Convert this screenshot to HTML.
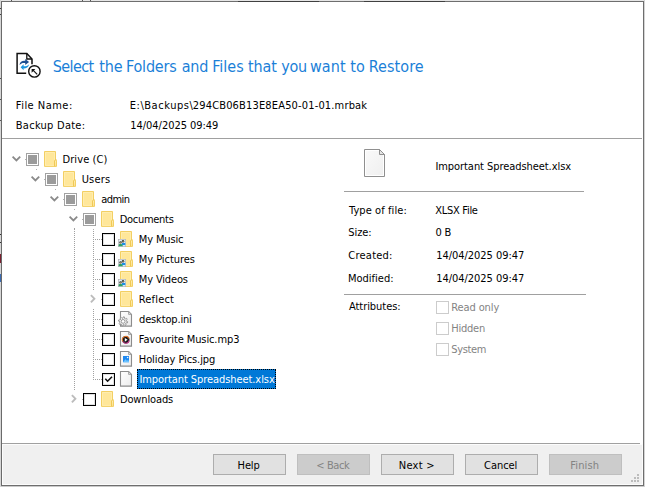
<!DOCTYPE html>
<html><head><meta charset="utf-8"><title>Restore</title>
<style>
html,body{margin:0;padding:0;}
body{width:645px;height:487px;overflow:hidden;background:#e6e6e6;position:relative;font-family:"DejaVu Sans Condensed","Liberation Sans",sans-serif;font-size:11px;color:#000;}
#win{position:absolute;left:1px;top:1px;width:641px;height:483px;border:1px solid #6e6e6e;border-left-color:#6a6a6a;background:#fff;}
.seg{position:absolute;top:1px;height:1px;background:#404040;}
.t{position:absolute;white-space:pre;line-height:14px;height:14px;}
.tt{font-size:16px;line-height:22px;height:22px;color:#1b7fd8;}
.hl{position:absolute;height:1px;background:#a0a0a0;}
#bar{position:absolute;left:2px;top:444px;width:641px;height:41px;background:#f0f0f0;border:1px solid #fcfcfc;box-sizing:border-box;}
.btn{position:absolute;top:454px;width:73px;height:21px;box-sizing:border-box;border:1px solid #adadad;background:#e1e1e1;}
.btn.dis{background:#cccccc;border-color:#bfbfbf;}
.cb{position:absolute;width:13px;height:13px;box-sizing:border-box;border:1px solid #000;background:#fff;box-shadow:inset 0 0 0 1px rgba(0,0,0,.12);}
.cb.mix{border-color:#a2a2a2;box-shadow:none;}
.cb.mix::after{content:"";position:absolute;left:1.3px;top:1.3px;width:8.4px;height:8.4px;background:#9b9b9b;}
.cbd{position:absolute;width:13px;height:13px;box-sizing:border-box;border:1px solid #cccccc;background:#fff;}
.sel{position:absolute;box-sizing:border-box;background:#0078d7;border:1px dotted #000;}
.vd{position:absolute;width:1px;background:repeating-linear-gradient(to bottom,#a0a0a0 0,#a0a0a0 1px,transparent 1px,transparent 2px);}
.hd{position:absolute;height:1px;background:repeating-linear-gradient(to right,#a0a0a0 0,#a0a0a0 1px,transparent 1px,transparent 2px);}
.dot{position:absolute;width:1px;height:1px;background:#b0b0b0;}
.gd{position:absolute;width:2px;height:2px;background:#bcbcbc;}
.px{position:absolute;}
.g{position:absolute;left:0;top:0;white-space:pre;}
svg{position:absolute;overflow:visible;}
</style></head><body>
<div class="px" style="left:0;top:486px;width:645px;height:1px;background:#cacaca"></div>
<div class="px" style="left:0;top:0;width:1px;height:487px;background:#d6d6d6"></div>
<div class="px" style="left:644px;top:0;width:1px;height:487px;background:#d4d4d4"></div>
<div id="win"></div>
<svg width="0" height="0" style="left:0;top:0"><defs><linearGradient id="dg2" x1="0" y1="0" x2="1" y2="1"><stop offset="0" stop-color="#ffffff"/><stop offset="1" stop-color="#ececec"/></linearGradient><linearGradient id="dg" x1="0" y1="0" x2="1" y2="1"><stop offset="0" stop-color="#fafafa"/><stop offset="1" stop-color="#efefef"/></linearGradient></defs></svg>
<div class="seg" style="left:238px;width:81px"></div>
<div class="seg" style="left:364px;width:81px"></div>
<div class="px" style="left:11px;top:0;width:1px;height:1px;background:#555"></div>
<div class="px" style="left:82px;top:0;width:1px;height:1px;background:#555"></div>
<div class="px" style="left:90px;top:0;width:1px;height:1px;background:#555"></div>
<div class="px" style="left:0;top:8px;width:1px;height:1px;background:#444"></div>
<div class="px" style="left:0;top:14px;width:1px;height:1px;background:#444"></div>
<div class="px" style="left:0;top:78px;width:1px;height:1px;background:#555"></div>
<div class="px" style="left:0;top:99px;width:1px;height:1px;background:#555"></div>
<div class="px" style="left:0;top:120px;width:1px;height:1px;background:#555"></div>
<div class="px" style="left:0;top:234px;width:1px;height:1px;background:#333"></div>
<div class="px" style="left:0;top:242px;width:1px;height:1px;background:#333"></div>
<div class="px" style="left:0;top:254px;width:1px;height:9px;background:#7a2030"></div>
<div class="px" style="left:0;top:274px;width:1px;height:8px;background:#3a6ab0"></div>
<svg style="left:15px;top:52px" width="28" height="28" viewBox="15 52 28 28">
<path d="M32 64.2V59L26.8 53.6H17.1V73.3H26.2" fill="none" stroke="#111" stroke-width="1.5"/>
<path d="M26.8 53.6V59H32" fill="none" stroke="#111" stroke-width="1.3"/>
<path d="M19.5 64.9C19.9 61.6 22.5 60.5 25.2 60.9V58.9L29.1 61.9L25.2 64.9V63C23 62.6 21 63.2 19.5 64.9Z" fill="#1d4f91"/>
<path d="M29.1 64.3C28.7 67.6 26.1 68.7 23.6 68.3V70.3L20.6 67.3L23.6 64.3V66.2C25.8 66.6 27.6 66 29.1 64.3Z" fill="#1c96e0"/>
<circle cx="34.4" cy="71.4" r="5.7" fill="#fff" stroke="#111" stroke-width="1.4"/>
<path d="M37.2 74.3L33 70.1" fill="none" stroke="#111" stroke-width="1.2"/>
<path d="M31.6 68.9H35.4L31.6 72.7Z" fill="#111"/>
</svg>
<div class="hl" style="left:2px;top:138px;width:640px"></div>
<svg style="left:364px;top:149px" width="22" height="28" viewBox="0 0 22 28">
<path d="M0.5 0.5H15.5L20.5 5.5V27.5H0.5Z" fill="url(#dg)" stroke="#8f8f8f" stroke-width="1"/>
<path d="M1.5 1.5H15L19.5 6V26.5H1.5Z" fill="none" stroke="#fff" stroke-width="1"/>
<path d="M15.5 0.5V5.5H20.5Z" fill="#e4e4e4" stroke="#8f8f8f" stroke-width="1"/>
</svg>
<div class="hl" style="left:344px;top:191px;width:240px"></div>
<div class="hl" style="left:344px;top:294px;width:242px"></div>
<div class="cbd" style="left:436px;top:301px"></div>
<div class="cbd" style="left:436px;top:322px"></div>
<div class="cbd" style="left:436px;top:343px"></div>
<div id="bar"></div>
<div class="hl" style="left:2px;top:443px;width:638px"></div>
<div class="btn" style="left:213px"></div>
<div class="btn dis" style="left:297px"></div>
<div class="btn" style="left:381px"></div>
<div class="btn" style="left:465px"></div>
<div class="btn dis" style="left:549px"></div>
<div class="gd" style="left:637px;top:474px"></div>
<div class="gd" style="left:634px;top:477px"></div><div class="gd" style="left:637px;top:477px"></div>
<div class="gd" style="left:631px;top:480px"></div><div class="gd" style="left:634px;top:480px"></div><div class="gd" style="left:637px;top:480px"></div>
<svg style="left:12px;top:155px" width="10" height="7" viewBox="0 0 10 7"><path d="M0.6 1.6L4.4 5.4L8.2 1.6" fill="none" stroke="#8a8a8a" stroke-width="1.8"/></svg>
<div class="cb mix" style="left:26px;top:153px"></div>
<svg style="left:44px;top:151px" width="13" height="16" viewBox="0 0 13 16"><path d="M0.5 0.5H11.5V9H12.5V15.4H0.5Z" fill="#ffe79a" stroke="#f3cf63" stroke-width="1"/><path d="M1.5 1.5H10.5V14.4H1.5Z" fill="none" stroke="#ffefb8" stroke-width="1" opacity="0.7"/><path d="M10.6 15.4V10Q10.6 9 11.5 9H12.5" fill="#ffefb4" stroke="#efc54e" stroke-width="1"/></svg>
<svg style="left:31px;top:175px" width="10" height="7" viewBox="0 0 10 7"><path d="M0.6 1.6L4.4 5.4L8.2 1.6" fill="none" stroke="#8a8a8a" stroke-width="1.8"/></svg>
<div class="cb mix" style="left:45px;top:173px"></div>
<svg style="left:63px;top:171px" width="13" height="16" viewBox="0 0 13 16"><path d="M0.5 0.5H11.5V9H12.5V15.4H0.5Z" fill="#ffe79a" stroke="#f3cf63" stroke-width="1"/><path d="M1.5 1.5H10.5V14.4H1.5Z" fill="none" stroke="#ffefb8" stroke-width="1" opacity="0.7"/><path d="M10.6 15.4V10Q10.6 9 11.5 9H12.5" fill="#ffefb4" stroke="#efc54e" stroke-width="1"/></svg>
<svg style="left:50px;top:195px" width="10" height="7" viewBox="0 0 10 7"><path d="M0.6 1.6L4.4 5.4L8.2 1.6" fill="none" stroke="#8a8a8a" stroke-width="1.8"/></svg>
<div class="cb mix" style="left:64px;top:193px"></div>
<svg style="left:82px;top:191px" width="13" height="16" viewBox="0 0 13 16"><path d="M0.5 0.5H11.5V9H12.5V15.4H0.5Z" fill="#ffe79a" stroke="#f3cf63" stroke-width="1"/><path d="M1.5 1.5H10.5V14.4H1.5Z" fill="none" stroke="#ffefb8" stroke-width="1" opacity="0.7"/><path d="M10.6 15.4V10Q10.6 9 11.5 9H12.5" fill="#ffefb4" stroke="#efc54e" stroke-width="1"/></svg>
<svg style="left:69px;top:215px" width="10" height="7" viewBox="0 0 10 7"><path d="M0.6 1.6L4.4 5.4L8.2 1.6" fill="none" stroke="#8a8a8a" stroke-width="1.8"/></svg>
<div class="cb mix" style="left:83px;top:213px"></div>
<svg style="left:101px;top:211px" width="13" height="16" viewBox="0 0 13 16"><path d="M0.5 0.5H11.5V9H12.5V15.4H0.5Z" fill="#ffe79a" stroke="#f3cf63" stroke-width="1"/><path d="M1.5 1.5H10.5V14.4H1.5Z" fill="none" stroke="#ffefb8" stroke-width="1" opacity="0.7"/><path d="M10.6 15.4V10Q10.6 9 11.5 9H12.5" fill="#ffefb4" stroke="#efc54e" stroke-width="1"/></svg>
<div class="cb" style="left:102px;top:233px"></div>
<svg style="left:120px;top:231px" width="13" height="16" viewBox="0 0 13 16"><path d="M0.5 0.5H11.5V9H12.5V15.4H0.5Z" fill="#ffe79a" stroke="#f3cf63" stroke-width="1"/><path d="M1.5 1.5H10.5V14.4H1.5Z" fill="none" stroke="#ffefb8" stroke-width="1" opacity="0.7"/><path d="M10.6 15.4V10Q10.6 9 11.5 9H12.5" fill="#ffefb4" stroke="#efc54e" stroke-width="1"/></svg>
<svg style="left:118px;top:239px" width="8" height="8" viewBox="0 0 8 8"><rect x="0" y="0" width="8" height="8" fill="#b3b5b9"/><rect x="0.7" y="0.7" width="6.6" height="6.6" fill="#e9f1f8"/><rect x="4" y="3.9" width="3.3" height="2.2" fill="#1f8fe6"/><circle cx="5" cy="2.3" r="1.25" fill="#3f4a3c"/><circle cx="5.1" cy="2.9" r="0.7" fill="#c9a27e"/><path d="M0.7 7.3V5.6Q2.4 3.9 4.2 5.6L5 7.3Z" fill="#2f9e5e"/><circle cx="2.5" cy="3.4" r="1.2" fill="#3f4a3c"/><circle cx="2.6" cy="3.9" r="0.7" fill="#c9a27e"/></svg>
<div class="cb" style="left:102px;top:253px"></div>
<svg style="left:120px;top:251px" width="13" height="16" viewBox="0 0 13 16"><path d="M0.5 0.5H11.5V9H12.5V15.4H0.5Z" fill="#ffe79a" stroke="#f3cf63" stroke-width="1"/><path d="M1.5 1.5H10.5V14.4H1.5Z" fill="none" stroke="#ffefb8" stroke-width="1" opacity="0.7"/><path d="M10.6 15.4V10Q10.6 9 11.5 9H12.5" fill="#ffefb4" stroke="#efc54e" stroke-width="1"/></svg>
<svg style="left:118px;top:259px" width="8" height="8" viewBox="0 0 8 8"><rect x="0" y="0" width="8" height="8" fill="#b3b5b9"/><rect x="0.7" y="0.7" width="6.6" height="6.6" fill="#e9f1f8"/><rect x="4" y="3.9" width="3.3" height="2.2" fill="#1f8fe6"/><circle cx="5" cy="2.3" r="1.25" fill="#3f4a3c"/><circle cx="5.1" cy="2.9" r="0.7" fill="#c9a27e"/><path d="M0.7 7.3V5.6Q2.4 3.9 4.2 5.6L5 7.3Z" fill="#2f9e5e"/><circle cx="2.5" cy="3.4" r="1.2" fill="#3f4a3c"/><circle cx="2.6" cy="3.9" r="0.7" fill="#c9a27e"/></svg>
<div class="cb" style="left:102px;top:273px"></div>
<svg style="left:120px;top:271px" width="13" height="16" viewBox="0 0 13 16"><path d="M0.5 0.5H11.5V9H12.5V15.4H0.5Z" fill="#ffe79a" stroke="#f3cf63" stroke-width="1"/><path d="M1.5 1.5H10.5V14.4H1.5Z" fill="none" stroke="#ffefb8" stroke-width="1" opacity="0.7"/><path d="M10.6 15.4V10Q10.6 9 11.5 9H12.5" fill="#ffefb4" stroke="#efc54e" stroke-width="1"/></svg>
<svg style="left:118px;top:279px" width="8" height="8" viewBox="0 0 8 8"><rect x="0" y="0" width="8" height="8" fill="#b3b5b9"/><rect x="0.7" y="0.7" width="6.6" height="6.6" fill="#e9f1f8"/><rect x="4" y="3.9" width="3.3" height="2.2" fill="#1f8fe6"/><circle cx="5" cy="2.3" r="1.25" fill="#3f4a3c"/><circle cx="5.1" cy="2.9" r="0.7" fill="#c9a27e"/><path d="M0.7 7.3V5.6Q2.4 3.9 4.2 5.6L5 7.3Z" fill="#2f9e5e"/><circle cx="2.5" cy="3.4" r="1.2" fill="#3f4a3c"/><circle cx="2.6" cy="3.9" r="0.7" fill="#c9a27e"/></svg>
<svg style="left:90px;top:294px" width="6" height="10" viewBox="0 0 6 10"><path d="M0.9 1.1L4.4 4.7L0.9 8.3" fill="none" stroke="#bcbcbc" stroke-width="1.9"/></svg>
<div class="cb" style="left:102px;top:293px"></div>
<svg style="left:120px;top:291px" width="13" height="16" viewBox="0 0 13 16"><path d="M0.5 0.5H11.5V9H12.5V15.4H0.5Z" fill="#ffe79a" stroke="#f3cf63" stroke-width="1"/><path d="M1.5 1.5H10.5V14.4H1.5Z" fill="none" stroke="#ffefb8" stroke-width="1" opacity="0.7"/><path d="M10.6 15.4V10Q10.6 9 11.5 9H12.5" fill="#ffefb4" stroke="#efc54e" stroke-width="1"/></svg>
<div class="cb" style="left:102px;top:313px"></div>
<svg style="left:120px;top:311px" width="13" height="16" viewBox="0 0 13 16"><path d="M0.5 0.5H8.6L11.5 3.4V15.1H0.5Z" fill="url(#dg2)" stroke="#8c8c8c" stroke-width="1.1"/><path d="M8.6 0.5V3.4H11.5Z" fill="#e2e2e2" stroke="#939393" stroke-width="0.8"/><g transform="translate(3.1,10.4)"><polygon points="4.59,0.30 4.36,1.47 2.96,1.46 2.48,2.17 3.03,3.46 2.04,4.12 1.06,3.13 0.22,3.29 -0.30,4.59 -1.47,4.36 -1.46,2.96 -2.17,2.48 -3.46,3.03 -4.12,2.04 -3.13,1.06 -3.29,0.22 -4.59,-0.30 -4.36,-1.47 -2.96,-1.46 -2.48,-2.17 -3.03,-3.46 -2.04,-4.12 -1.06,-3.13 -0.22,-3.29 0.30,-4.59 1.47,-4.36 1.46,-2.96 2.17,-2.48 3.46,-3.03 4.12,-2.04 3.13,-1.06 3.29,-0.22" fill="#f4f4f4" stroke="#8d8d8d" stroke-width="0.9"/><circle r="1.9" fill="#fff" stroke="#8d8d8d" stroke-width="0.9"/></g></svg>
<div class="cb" style="left:102px;top:333px"></div>
<svg style="left:120px;top:331px" width="13" height="16" viewBox="0 0 13 16"><path d="M0.5 0.5H8.6L11.5 3.4V15.1H0.5Z" fill="url(#dg2)" stroke="#8c8c8c" stroke-width="1.1"/><path d="M8.6 0.5V3.4H11.5Z" fill="#e2e2e2" stroke="#939393" stroke-width="0.8"/><circle cx="5.8" cy="8.8" r="3.7" fill="#1b1b1b"/><circle cx="5.8" cy="8.8" r="3.4" fill="none" stroke="#f07a28" stroke-width="1" stroke-dasharray="11 11" transform="rotate(150 5.8 8.8)"/><circle cx="5.8" cy="8.8" r="3.4" fill="none" stroke="#c43a8c" stroke-width="1" stroke-dasharray="8 14" transform="rotate(10 5.8 8.8)"/><path d="M4.8 6.9L7.6 8.8L4.8 10.7Z" fill="#fff"/></svg>
<div class="cb" style="left:102px;top:353px"></div>
<svg style="left:120px;top:351px" width="13" height="16" viewBox="0 0 13 16"><path d="M0.5 0.5H8.6L11.5 3.4V15.1H0.5Z" fill="url(#dg2)" stroke="#8c8c8c" stroke-width="1.1"/><path d="M8.6 0.5V3.4H11.5Z" fill="#e2e2e2" stroke="#939393" stroke-width="0.8"/><rect x="3" y="5" width="6" height="6.2" fill="#1e88f0"/><path d="M3 11.2L5.4 8.2L7 9.8L8 9L9 10V11.2Z" fill="#6cc4ff"/><circle cx="7.6" cy="6.5" r="0.8" fill="#e8f6ff"/></svg>
<div class="cb" style="left:102px;top:373px"><svg style="left:1px;top:1px" width="11" height="11" viewBox="0 0 11 11"><path d="M1.3 3.7L3.6 6.2L8 1.7" fill="none" stroke="#111" stroke-width="1.6"/></svg></div>
<svg style="left:120px;top:371px" width="13" height="16" viewBox="0 0 13 16"><path d="M0.5 0.5H8.6L11.5 3.4V15.1H0.5Z" fill="url(#dg2)" stroke="#8c8c8c" stroke-width="1.1"/><path d="M8.6 0.5V3.4H11.5Z" fill="#e2e2e2" stroke="#939393" stroke-width="0.8"/></svg>
<div class="sel" style="left:137px;top:369px;width:139px;height:20px"></div>
<svg style="left:71px;top:394px" width="6" height="10" viewBox="0 0 6 10"><path d="M0.9 1.1L4.4 4.7L0.9 8.3" fill="none" stroke="#bcbcbc" stroke-width="1.9"/></svg>
<div class="cb" style="left:83px;top:393px"></div>
<svg style="left:101px;top:391px" width="13" height="16" viewBox="0 0 13 16"><path d="M0.5 0.5H11.5V9H12.5V15.4H0.5Z" fill="#ffe79a" stroke="#f3cf63" stroke-width="1"/><path d="M1.5 1.5H10.5V14.4H1.5Z" fill="none" stroke="#ffefb8" stroke-width="1" opacity="0.7"/><path d="M10.6 15.4V10Q10.6 9 11.5 9H12.5" fill="#ffefb4" stroke="#efc54e" stroke-width="1"/></svg>
<div class="vd" style="left:74px;top:229px;height:161px"></div>
<div class="vd" style="left:74px;top:228px;height:1px"></div>
<div class="vd" style="left:93px;top:229px;height:62px"></div>
<div class="vd" style="left:93px;top:309px;height:71px"></div>
<div class="hd" style="left:95px;top:239px;width:7px"></div>
<div class="hd" style="left:95px;top:259px;width:7px"></div>
<div class="hd" style="left:95px;top:279px;width:7px"></div>
<div class="hd" style="left:95px;top:319px;width:7px"></div>
<div class="hd" style="left:95px;top:339px;width:7px"></div>
<div class="hd" style="left:95px;top:359px;width:7px"></div>
<div class="hd" style="left:95px;top:379px;width:7px"></div>
<div class="dot" style="left:25px;top:159px"></div>
<div class="dot" style="left:36px;top:169px"></div>
<div class="dot" style="left:44px;top:179px"></div>
<div class="dot" style="left:55px;top:189px"></div>
<div class="dot" style="left:63px;top:199px"></div>
<div class="dot" style="left:74px;top:209px"></div>
<div class="dot" style="left:82px;top:219px"></div>
<div class="dot" style="left:93px;top:229px"></div>
<div class="dot" style="left:101px;top:299px"></div>
<div class="dot" style="left:82px;top:399px"></div>
<div class="t" style="left:62.52px;top:153px;letter-spacing:0.085px">Drive (C)</div>
<div class="t" style="left:81.69px;top:173px;letter-spacing:0.160px">Users</div>
<div class="t" style="left:101.23px;top:193px;letter-spacing:-0.528px">admin</div>
<div class="t" style="left:119.72px;top:213px;letter-spacing:-0.290px">Documents</div>
<div class="t" style="left:138.82px;top:233px;letter-spacing:-0.143px">My Music</div>
<div class="t" style="left:138.82px;top:253px;letter-spacing:-0.061px">My Pictures</div>
<div class="t" style="left:138.82px;top:273px;letter-spacing:-0.157px">My Videos</div>
<div class="t" style="left:138.82px;top:293px;letter-spacing:0.155px">Reflect</div>
<div class="t" style="left:139.06px;top:313px;letter-spacing:-0.158px">desktop.ini</div>
<div class="t" style="left:138.82px;top:333px;letter-spacing:-0.097px">Favourite Music.mp3</div>
<div class="t" style="left:138.82px;top:353px;letter-spacing:-0.095px">Holiday Pics.jpg</div>
<div class="t" style="left:139.42px;top:373px;letter-spacing:-0.077px;color:#fff">Important Spreadsheet.xlsx</div>
<div class="t" style="left:119.92px;top:393px;letter-spacing:-0.130px">Downloads</div>
<div class="t" style="left:15.82px;top:99px;letter-spacing:0.473px">File Name:</div>
<div class="t" style="left:15.82px;top:119px;letter-spacing:0.261px">Backup Date:</div>
<div class="t" style="left:130.30px;top:119px;letter-spacing:-0.045px">14/04/2025 09:49</div>
<div class="t" style="left:435.42px;top:160px;letter-spacing:-0.062px">Important Spreadsheet.xlsx</div>
<div class="t" style="left:349.01px;top:204px;letter-spacing:0.083px">Type of file:</div>
<div class="t" style="left:435.36px;top:204px;letter-spacing:-0.301px">XLSX File</div>
<div class="t" style="left:348.18px;top:226px;letter-spacing:-0.040px">Size:</div>
<div class="t" style="left:435.58px;top:226px;letter-spacing:-0.286px">0 B</div>
<div class="t" style="left:348.27px;top:249px;letter-spacing:0.242px">Created:</div>
<div class="t" style="left:436.30px;top:249px;letter-spacing:-0.047px">14/04/2025 09:47</div>
<div class="t" style="left:348.02px;top:272px;letter-spacing:-0.012px">Modified:</div>
<div class="t" style="left:436.30px;top:272px;letter-spacing:-0.047px">14/04/2025 09:47</div>
<div class="t" style="left:348.94px;top:300px;letter-spacing:-0.043px">Attributes:</div>
<div class="t" style="left:451.32px;top:301px;letter-spacing:-0.121px;color:#838383">Read only</div>
<div class="t" style="left:451.32px;top:322px;letter-spacing:-0.258px;color:#838383">Hidden</div>
<div class="t" style="left:451.28px;top:343px;letter-spacing:-0.333px;color:#838383">System</div>
<div class="t" style="left:237.62px;top:459px;letter-spacing:-0.152px">Help</div>
<div class="t" style="left:316.29px;top:459px;letter-spacing:-0.380px;color:#838383">&lt; Back</div>
<div class="t" style="left:398.72px;top:459px;letter-spacing:0.287px">Next &gt;</div>
<div class="t" style="left:484.07px;top:459px;letter-spacing:-0.054px">Cancel</div>
<div class="t" style="left:570.32px;top:459px;letter-spacing:0.111px;color:#838383">Finish</div>
<div class="g" id="title"><span class="t tt" style="left:52.81px;top:56px;letter-spacing:-0.624px">Select</span> <span class="t tt" style="left:99.16px;top:56px;letter-spacing:-0.067px">the</span> <span class="t tt" style="left:126.03px;top:56px;letter-spacing:-0.205px">Folders</span> <span class="t tt" style="left:181.85px;top:56px;letter-spacing:-0.317px">and</span> <span class="t tt" style="left:212.23px;top:56px;letter-spacing:-0.008px">Files</span> <span class="t tt" style="left:247.96px;top:56px;letter-spacing:-0.128px">that</span> <span class="t tt" style="left:281.25px;top:56px;letter-spacing:-0.340px">you</span> <span class="t tt" style="left:309.98px;top:56px;letter-spacing:0.073px">want</span> <span class="t tt" style="left:350.26px;top:56px;letter-spacing:0.060px">to</span> <span class="t tt" style="left:368.73px;top:56px;letter-spacing:0.068px">Restore</span></div>
<div class="g" id="path"><span class="t" style="left:129.72px;top:99px;letter-spacing:0.543px">E:\Backups\</span><span class="t" style="left:192.78px;top:99px;letter-spacing:0.160px">294CB06B13E8EA50-01-01.mrbak</span></div>
</body></html>
